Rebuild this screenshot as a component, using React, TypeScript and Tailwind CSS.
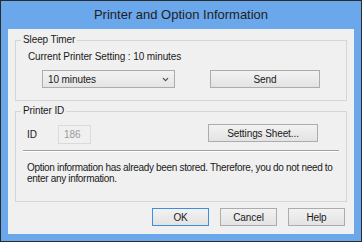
import { ChevronDown } from 'lucide-react';

function Button({ label, focused = false, className = '' }: { label: string; focused?: boolean; className?: string }) {
  return (
    <button
      className={`h-[18px] flex items-center justify-center border ${
        focused ? 'border-[#3c8ee0]' : 'border-[#acacac]'
      } bg-gradient-to-b from-[#f2f2f2] to-[#e3e3e3] text-[10px] text-[#1a1a1a] ${className}`}
    >
      {label}
    </button>
  );
}

function GroupBox({ title, className = '', children }: { title: string; className?: string; children: React.ReactNode }) {
  return (
    <div className={`relative border border-[#d5d5d5] ${className}`}>
      <span className="absolute -top-[7px] left-[5px] bg-[#f0f0f0] px-[2px] text-[10px] leading-[12px] text-[#1a1a1a]">
        {title}
      </span>
      {children}
    </div>
  );
}

export default function App() {
  return (
    <div
      className="w-[362px] h-[242px] flex flex-col border border-[#2b2b2b] bg-[#6ba7eb] select-none tracking-[-0.1px]"
      style={{ fontFamily: '"Liberation Sans", Arial, sans-serif' }}
    >
      {/* Title bar */}
      <div className="h-[28px] flex items-center justify-center text-[13px] tracking-normal text-[#1e1e1e]">
        Printer and Option Information
      </div>

      {/* Client area */}
      <div className="mx-[7px] mb-[7px] flex-1 bg-[#f0f0f0] px-[7px] pt-[11px] flex flex-col">
        <GroupBox title="Sleep Timer" className="h-[61px]">
          <div className="pl-[12px] pt-[10px] text-[10px] leading-[12px] text-[#1a1a1a]">
            Current Printer Setting : 10 minutes
          </div>
          <div className="mt-[7px] flex items-center">
            <div className="ml-[26px] w-[133px] h-[18px] border border-[#acacac] bg-gradient-to-b from-[#f2f2f2] to-[#e5e5e5] flex items-center justify-between pl-[5px] pr-[4px] text-[10px] text-[#1a1a1a]">
              <span>10 minutes</span>
              <ChevronDown className="size-[9px] text-[#444]" strokeWidth={3} />
            </div>
            <Button label="Send" className="ml-[35px] w-[110px]" />
          </div>
        </GroupBox>

        <GroupBox title="Printer ID" className="mt-[10px] h-[91px]">
          <div className="flex items-center pt-[13px]">
            <span className="ml-[11px] w-[31px] text-[10px] text-[#1a1a1a]">ID</span>
            <div className="w-[33px] h-[19px] border border-[#dadada] bg-[#f0f0f0] flex items-center pl-[5px] text-[10px] text-[#9a9a9a]">
              186
            </div>
            <Button label="Settings Sheet..." className="ml-[117px] w-[110px] -mt-[3px]" />
          </div>
          <div className="mx-[7px] mt-[6px] h-[2px] border-t border-[#a0a0a0] border-b border-b-white" />
          <p className="mt-[10px] pl-[11px] whitespace-nowrap text-[10px] leading-[11px] tracking-[-0.32px] text-[#1a1a1a]">
            Option information has already been stored. Therefore, you do not need to
            <br />
            enter any information.
          </p>
        </GroupBox>

        <div className="mt-[6px] flex justify-end gap-[11px] pr-[2px]">
          <Button label="OK" focused className="w-[57px]" />
          <Button label="Cancel" className="w-[57px]" />
          <Button label="Help" className="w-[57px]" />
        </div>
      </div>
    </div>
  );
}
